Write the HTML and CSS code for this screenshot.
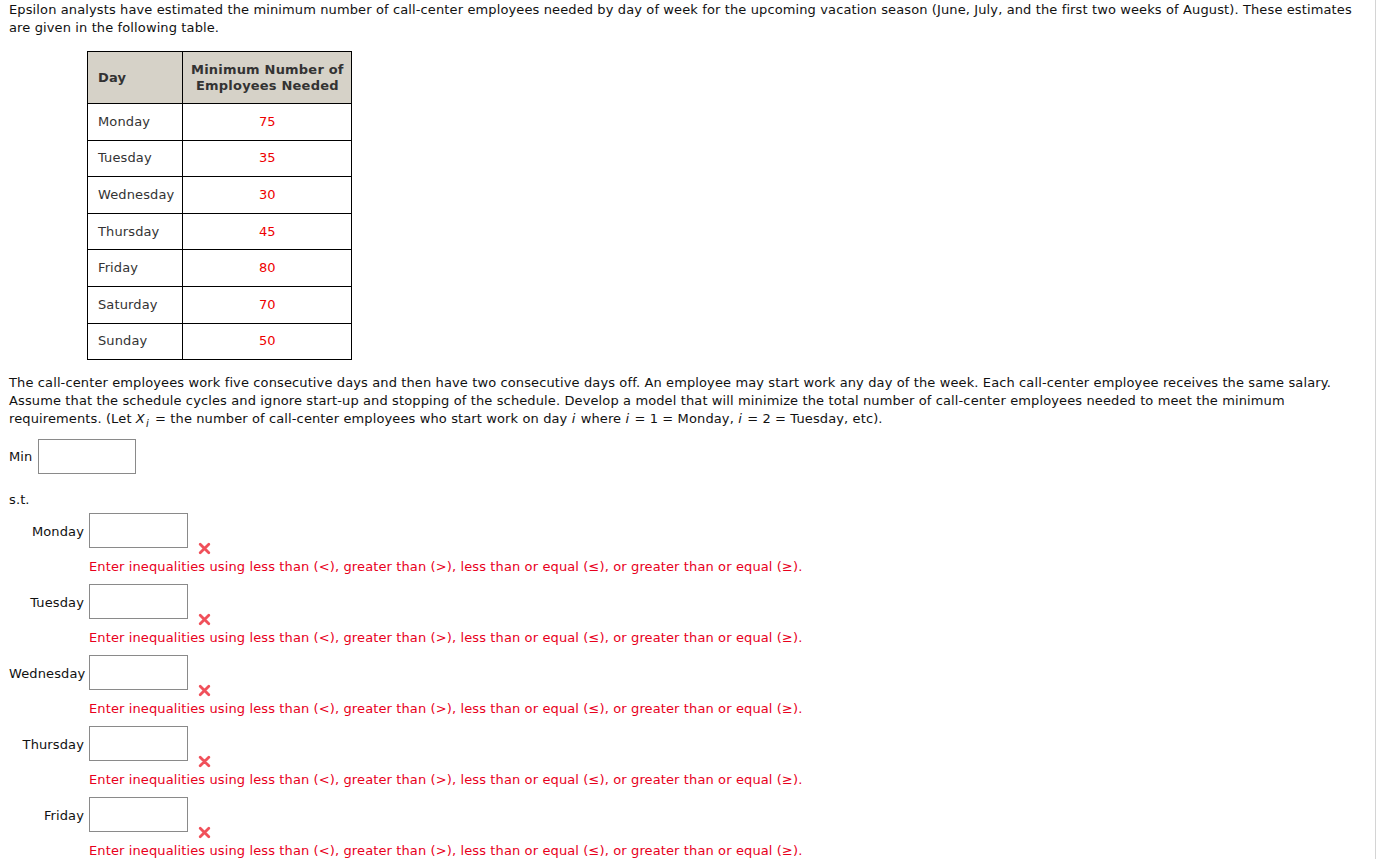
FILE: index.html
```html
<!DOCTYPE html>
<html>
<head>
<meta charset="utf-8">
<link rel="stylesheet" href="styles.css">
</head>
<body>
<div class="page">
  <p class="intro">Epsilon analysts have estimated the minimum number of call-center employees needed by day of week for the upcoming vacation season (June, July, and the first two weeks of August). These estimates are given in the following table.</p>
  <table class="data">
    <tr class="head"><th class="c1">Day</th><th class="c2">Minimum Number of<br>Employees Needed</th></tr>
    <tr><td class="c1">Monday</td><td class="c2 num">75</td></tr>
    <tr><td class="c1">Tuesday</td><td class="c2 num">35</td></tr>
    <tr><td class="c1">Wednesday</td><td class="c2 num">30</td></tr>
    <tr><td class="c1">Thursday</td><td class="c2 num">45</td></tr>
    <tr><td class="c1">Friday</td><td class="c2 num">80</td></tr>
    <tr><td class="c1">Saturday</td><td class="c2 num">70</td></tr>
    <tr><td class="c1">Sunday</td><td class="c2 num">50</td></tr>
  </table>
  <p class="desc">The call-center employees work five consecutive days and then have two consecutive days off. An employee may start work any day of the week. Each call-center employee receives the same salary. Assume that the schedule cycles and ignore start-up and stopping of the schedule. Develop a model that will minimize the total number of call-center employees needed to meet the minimum requirements. (Let <i class="var">X</i><sub class="sub">i</sub> = the number of call-center employees who start work on day <i class="var">i</i> where <i class="var">i</i> = 1 = Monday, <i class="var">i</i> = 2 = Tuesday, etc).</p>
  <div class="minrow"><span class="minlabel">Min</span><span class="box minbox"></span></div>
  <div class="st">s.t.</div>

  <div class="constraint">
    <div class="crow"><span class="clabel">Monday</span><span class="box"></span><svg class="xicon" viewBox="0 0 13 13"><path d="M2.2 2.2 L10.8 10.8 M10.8 2.2 L2.2 10.8"/></svg></div>
    <div class="err">Enter inequalities using less than (&lt;), greater than (&gt;), less than or equal (&le;), or greater than or equal (&ge;).</div>
  </div>
  <div class="constraint">
    <div class="crow"><span class="clabel">Tuesday</span><span class="box"></span><svg class="xicon" viewBox="0 0 13 13"><path d="M2.2 2.2 L10.8 10.8 M10.8 2.2 L2.2 10.8"/></svg></div>
    <div class="err">Enter inequalities using less than (&lt;), greater than (&gt;), less than or equal (&le;), or greater than or equal (&ge;).</div>
  </div>
  <div class="constraint">
    <div class="crow"><span class="clabel">Wednesday</span><span class="box"></span><svg class="xicon" viewBox="0 0 13 13"><path d="M2.2 2.2 L10.8 10.8 M10.8 2.2 L2.2 10.8"/></svg></div>
    <div class="err">Enter inequalities using less than (&lt;), greater than (&gt;), less than or equal (&le;), or greater than or equal (&ge;).</div>
  </div>
  <div class="constraint">
    <div class="crow"><span class="clabel">Thursday</span><span class="box"></span><svg class="xicon" viewBox="0 0 13 13"><path d="M2.2 2.2 L10.8 10.8 M10.8 2.2 L2.2 10.8"/></svg></div>
    <div class="err">Enter inequalities using less than (&lt;), greater than (&gt;), less than or equal (&le;), or greater than or equal (&ge;).</div>
  </div>
  <div class="constraint">
    <div class="crow"><span class="clabel">Friday</span><span class="box"></span><svg class="xicon" viewBox="0 0 13 13"><path d="M2.2 2.2 L10.8 10.8 M10.8 2.2 L2.2 10.8"/></svg></div>
    <div class="err">Enter inequalities using less than (&lt;), greater than (&gt;), less than or equal (&le;), or greater than or equal (&ge;).</div>
  </div>
</div>
</body>
</html>
```
FILE: styles.css
```css
html, body {
  margin: 0;
  padding: 0;
  background: #fff;
}
body {
  font-family: "DejaVu Sans", Verdana, sans-serif;
  font-size: 13px;
  line-height: 18px;
  letter-spacing: 0.12px;
  color: #111;
}
.page {
  width: 1376px;
  min-height: 859px;
  box-sizing: border-box;
  padding: 1px 18px 0 9px;
  border-right: 1px solid #d4d4d4;
}
p {
  margin: 0;
}
.intro {
  margin-bottom: 14px;
}
.data {
  border-collapse: collapse;
  margin-left: 78px;
  color: #333;
}
.data th, .data td {
  border: 1px solid #000;
  padding: 0 10px;
  vertical-align: middle;
}
.data .c1 {
  width: 74px;
  padding-right: 8px;
  text-align: left;
}
.data .c2 {
  width: 156px;
  padding: 0 6px;
  text-align: center;
  white-space: nowrap;
}
.data .head th {
  background: #d6d2c8;
  font-weight: bold;
  height: 51px;
  line-height: 16px;
  letter-spacing: 0.2px;
}
.data td {
  height: 35.6px;
}
.data .num {
  color: #ee0000;
}
.desc {
  margin-top: 14px;
}
.var {
  margin-right: 1px;
}
.sub {
  font-size: 10px;
  font-style: italic;
  line-height: 0;
  vertical-align: -4px;
  margin-right: 2px;
}
.minrow {
  display: flex;
  align-items: center;
  gap: 6px;
  margin-top: 11px;
}
.box {
  display: block;
  width: 97px;
  height: 33px;
  border: 1px solid #8a8a8a;
  background: #fff;
  flex: none;
}
.minbox {
  width: 96px;
}
.st {
  margin-top: 17px;
  margin-bottom: 4px;
}
.constraint {
  margin-bottom: 8px;
}
.crow {
  display: flex;
  align-items: flex-start;
  height: 41px;
}
.clabel {
  width: 75px;
  margin-right: 5px;
  text-align: right;
  line-height: 18px;
  margin-top: 10px;
  color: #111;
}
.xicon {
  width: 13px;
  height: 13px;
  margin-top: 29px;
  margin-left: 10px;
  flex: none;
}
.xicon path {
  stroke: #f0505a;
  stroke-width: 2.8;
  stroke-linecap: round;
  fill: none;
}
.err {
  margin-left: 80px;
  margin-top: 4px;
  color: #e8001c;
}
```
